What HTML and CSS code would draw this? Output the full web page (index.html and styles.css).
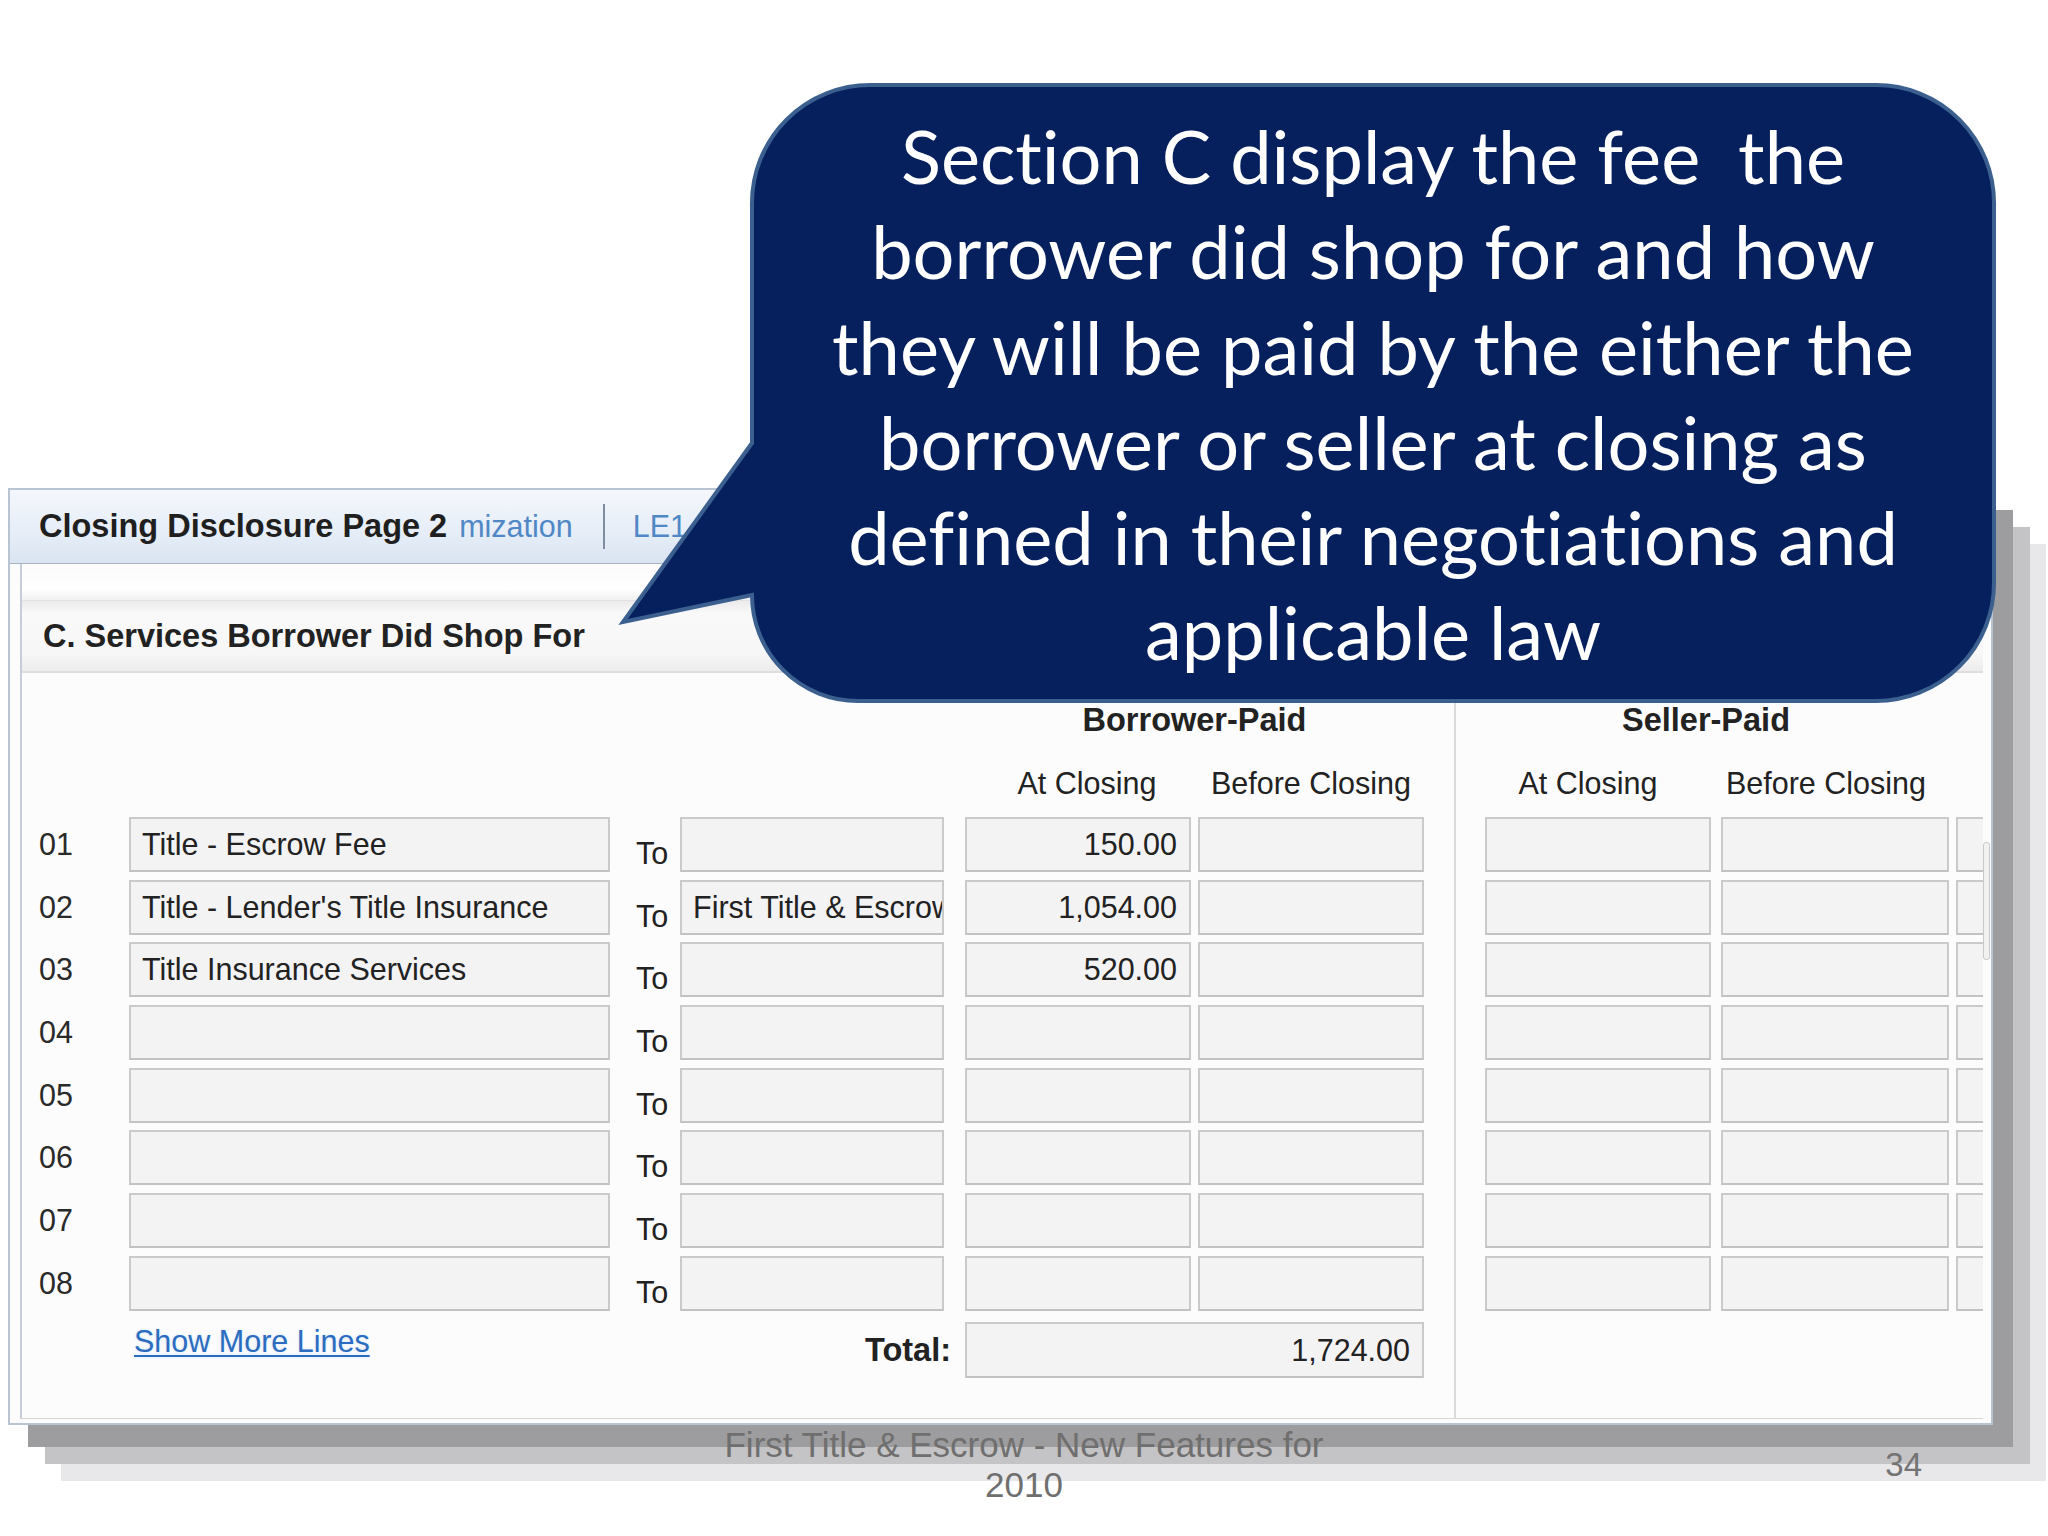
FILE: index.html
```html
<!DOCTYPE html>
<html lang="en">
<head>
<meta charset="utf-8">
<title>Section C - Services Borrower Did Shop For</title>
<link rel="stylesheet" href="styles.css">
</head>
<body>
<div class="slide">
  <div class="panel">
    <div class="titlebar">
      <span class="tb-title">Closing Disclosure Page 2</span>
      <span class="tb-link tb-mz">mization</span>
      <span class="tb-sep"></span>
      <span class="tb-link">LE1</span>
    </div>
    <div class="body">
      <div class="frame">
        <div class="strip"></div>
        <div class="section-head">C. Services Borrower Did Shop For</div>
        <div class="table">
          <div class="r hdr1">
            <div class="gh b">Borrower-Paid</div>
            <div class="dv"></div>
            <div class="gh s">Seller-Paid</div>
          </div>
          <div class="r hdr2">
            <div class="sh c6">At Closing</div>
            <div class="sh c8">Before Closing</div>
            <div class="dv"></div>
            <div class="sh c10">At Closing</div>
            <div class="sh c12">Before Closing</div>
          </div>

          <div class="r row">
            <div class="num">01</div>
            <div class="box">Title - Escrow Fee</div>
            <div class="to">To</div>
            <div class="box"></div>
            <div class="box num-r c6">150.00</div>
            <div class="box c8"></div>
            <div class="dv"></div>
            <div class="box c10"></div>
            <div class="box c12"></div>
            <div class="box c14"></div>
          </div>
          <div class="r row">
            <div class="num">02</div>
            <div class="box">Title - Lender's Title Insurance</div>
            <div class="to">To</div>
            <div class="box">First Title &amp; Escrow</div>
            <div class="box num-r c6">1,054.00</div>
            <div class="box c8"></div>
            <div class="dv"></div>
            <div class="box c10"></div>
            <div class="box c12"></div>
            <div class="box c14"></div>
          </div>
          <div class="r row">
            <div class="num">03</div>
            <div class="box">Title Insurance Services</div>
            <div class="to">To</div>
            <div class="box"></div>
            <div class="box num-r c6">520.00</div>
            <div class="box c8"></div>
            <div class="dv"></div>
            <div class="box c10"></div>
            <div class="box c12"></div>
            <div class="box c14"></div>
          </div>
          <div class="r row">
            <div class="num">04</div>
            <div class="box"></div>
            <div class="to">To</div>
            <div class="box"></div>
            <div class="box c6"></div>
            <div class="box c8"></div>
            <div class="dv"></div>
            <div class="box c10"></div>
            <div class="box c12"></div>
            <div class="box c14"></div>
          </div>
          <div class="r row">
            <div class="num">05</div>
            <div class="box"></div>
            <div class="to">To</div>
            <div class="box"></div>
            <div class="box c6"></div>
            <div class="box c8"></div>
            <div class="dv"></div>
            <div class="box c10"></div>
            <div class="box c12"></div>
            <div class="box c14"></div>
          </div>
          <div class="r row">
            <div class="num">06</div>
            <div class="box"></div>
            <div class="to">To</div>
            <div class="box"></div>
            <div class="box c6"></div>
            <div class="box c8"></div>
            <div class="dv"></div>
            <div class="box c10"></div>
            <div class="box c12"></div>
            <div class="box c14"></div>
          </div>
          <div class="r row">
            <div class="num">07</div>
            <div class="box"></div>
            <div class="to">To</div>
            <div class="box"></div>
            <div class="box c6"></div>
            <div class="box c8"></div>
            <div class="dv"></div>
            <div class="box c10"></div>
            <div class="box c12"></div>
            <div class="box c14"></div>
          </div>
          <div class="r row">
            <div class="num">08</div>
            <div class="box"></div>
            <div class="to">To</div>
            <div class="box"></div>
            <div class="box c6"></div>
            <div class="box c8"></div>
            <div class="dv"></div>
            <div class="box c10"></div>
            <div class="box c12"></div>
            <div class="box c14"></div>
          </div>

          <div class="r total-row">
            <a class="more" href="#">Show More Lines</a>
            <div class="total-label">Total:</div>
            <div class="box num-r total-box">1,724.00</div>
            <div class="dv"></div>
          </div>
        </div>
      </div>
      <div class="track"><div class="thumb"></div></div>
    </div>
  </div>

  <div class="footer">
    <div></div>
    <div class="foot-text">First Title &amp; Escrow - New Features for<br>2010</div>
    <div class="page-num">34</div>
  </div>

  <svg class="callout" viewBox="0 0 2048 760" width="2048" height="760" aria-hidden="true">
    <path d="M 870 85 H 1876 A 118 118 0 0 1 1994 203 V 583 A 118 118 0 0 1 1876 701 H 858 A 106 106 0 0 1 752 595 L 623 622 L 752 443 V 203 A 118 118 0 0 1 870 85 Z" fill="#06205e" stroke="#3b5f8f" stroke-width="4" stroke-linejoin="miter"/>
  </svg>
  <div class="callout-text">Section C display the fee&nbsp; the<br>borrower did shop for and how<br>they will be paid by the either the<br>borrower or seller at closing as<br>defined in their negotiations and<br>applicable law</div>
</div>
</body>
</html>
```

FILE: styles.css
```css
* { box-sizing: border-box; }

html, body {
  margin: 0;
  padding: 0;
  background: #ffffff;
}

body {
  width: 2048px;
  height: 1536px;
  overflow: hidden;
  font-family: "Liberation Sans", Arial, sans-serif;
  color: #222;
}

.slide {
  position: relative;
  width: 2048px;
  height: 1536px;
  padding-top: 488px;
}

/* ---------- screenshot panel ---------- */
.panel {
  margin-left: 8px;
  width: 1985px;
  height: 937px;
  border: 2px solid #b9c4d2;
  background: #fcfcfd;
  display: flex;
  flex-direction: column;
  box-shadow: 20px 22px 0 #9d9c9e, 37px 39px 0 #c4c3c5, 53px 56px 0 #e8e7e9;
}

.titlebar {
  flex: none;
  height: 74px;
  display: flex;
  align-items: center;
  padding-left: 29px;
  background: linear-gradient(#f4f7fc, #e7eef8 55%, #dae4f1);
  border-bottom: 1px solid #a7b3c2;
}

.tb-title {
  font-weight: bold;
  font-size: 32.5px;
  color: #1f1f1f;
}

.tb-link {
  font-size: 30.5px;
  color: #4f88c5;
}

.tb-mz { margin-left: 12px; }

.tb-sep {
  width: 2px;
  height: 45px;
  background: #7f8d9e;
  margin: 0 28px 0 30px;
}

.body {
  flex: 1;
  display: flex;
  min-height: 0;
}

.frame {
  flex: 1;
  min-width: 0;
  margin-left: 10px;
  margin-bottom: 4px;
  border-left: 2px solid #c6cdd7;
  border-bottom: 1px solid #d6d6d6;
  overflow: hidden;
  display: flex;
  flex-direction: column;
  background: #fcfcfd;
}

.track {
  flex: none;
  width: 8px;
  padding-top: 278px;
}

.thumb {
  width: 7px;
  height: 118px;
  border: 1px solid #c9c9c9;
  border-radius: 3px;
  background: #f1f1f1;
}

.strip {
  flex: none;
  height: 36px;
  background: linear-gradient(#fbfbfb, #ffffff 70%, #f1f1f1);
}

.section-head {
  flex: none;
  height: 73px;
  line-height: 70px;
  padding-left: 21px;
  font-weight: bold;
  font-size: 32.5px;
  color: #222;
  border-top: 1px solid #e2e2e2;
  border-bottom: 2px solid #dedede;
  background: linear-gradient(#ebebeb, #f9f9f9 18%, #f7f7f7 75%, #ececec);
}

.table {
  flex: 1;
  display: flex;
  flex-direction: column;
  padding-left: 17px;
  padding-top: 17px;
  font-size: 30.5px;
}

.r {
  display: grid;
  grid-template-columns: 90px 481px 70px 264px 21px 226px 7px 226px 61px 226px 10px 228px 7px 60px;
}

.hdr1 { height: 60px; }
.hdr2 { height: 67px; }
.row { height: 62.7px; }
.total-row { flex: 1; }

.dv {
  grid-column: 9;
  background: linear-gradient(#dadada, #dadada) center / 2px 100% no-repeat;
}

.gh {
  font-weight: bold;
  font-size: 32.5px;
  line-height: 60px;
  text-align: center;
  color: #222;
}

.gh.b { grid-column: 6 / 9; }
.gh.s { grid-column: 10 / 13; padding-right: 22px; }

.sh {
  line-height: 67px;
  text-align: center;
  color: #222;
  white-space: nowrap;
}

.c6 { grid-column: 6; }
.c8 { grid-column: 8; }
.c10 { grid-column: 10; }
.c12 { grid-column: 12; }
.c14 { grid-column: 14; }

.sh.c6 { padding-left: 18px; }
.sh.c10 { padding-right: 20px; }
.sh.c12 { padding-right: 18px; }

.num {
  line-height: 55px;
  color: #2a2a2a;
}

.box {
  height: 55px;
  line-height: 51px;
  padding: 0 11px;
  border: 2px solid #cacaca;
  border-bottom-color: #c2c2c2;
  background: #f3f3f4;
  color: #222;
  white-space: nowrap;
  overflow: hidden;
}

.num-r {
  text-align: right;
  padding-right: 12px;
}

.to {
  padding-left: 26px;
  padding-top: 9px;
  line-height: 55px;
  color: #222;
}

.more {
  grid-column: 2;
  justify-self: start;
  margin-left: 5px;
  line-height: 44px;
  height: 44px;
  color: #2b6cc0;
  text-decoration: underline;
  text-decoration-thickness: 2px;
  text-underline-offset: 3px;
  text-shadow: 0 0 3px #cfe3f7;
}

.total-label {
  grid-column: 3 / 6;
  text-align: right;
  padding-right: 14px;
  margin-top: 3px;
  line-height: 56px;
  font-weight: bold;
  font-size: 32.5px;
  color: #222;
}

.total-box {
  grid-column: 6 / 9;
  margin-top: 3px;
  height: 56px;
  line-height: 52px;
}

/* ---------- slide footer ---------- */
.footer {
  display: grid;
  grid-template-columns: 1fr auto 1fr;
  align-items: center;
  color: #6f6f6f;
}

.foot-text {
  text-align: center;
  font-size: 35px;
  line-height: 40px;
}

.page-num {
  justify-self: end;
  padding-right: 126px;
  font-size: 33px;
  color: #747474;
}

/* ---------- callout ---------- */
.callout {
  position: absolute;
  left: 0;
  top: 0;
  pointer-events: none;
}

.callout-text {
  position: absolute;
  left: 752px;
  top: 108px;
  width: 1242px;
  text-align: center;
  font-family: Lato, "Open Sans", sans-serif;
  font-size: 74px;
  line-height: 95.3px;
  font-variant-ligatures: none;
  color: #ffffff;
}
```
